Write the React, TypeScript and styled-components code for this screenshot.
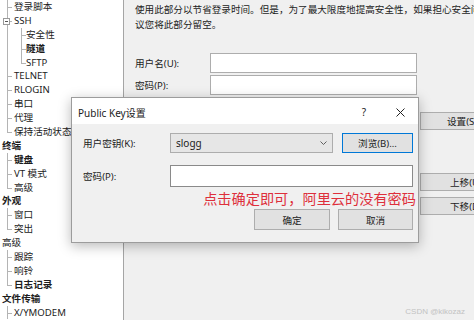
import React from 'react';
import styled, { createGlobalStyle } from 'styled-components';

const LINE = '#b4b4b4';

const GlobalStyle = createGlobalStyle`
    html, body {
        margin: 0;
        padding: 0;
    }
    body {
        font-family: "Noto Sans", "Noto Sans CJK SC", sans-serif;
        font-size: 9.6px;
        color: #1c1c1c;
        background: #f0f0f0;
    }
`;

const Window = styled.div`
    position: relative;
    display: flex;
    width: 474px;
    height: 320px;
    overflow: hidden;
    background: #f0f0f0;
`;

/* ---------- left tree ---------- */

const Tree = styled.ul`
    flex: none;
    width: 123px;
    margin: 0;
    padding: 0;
    list-style: none;
    background: #fff;
    border-right: 1px solid #a5a5a5;
    overflow: hidden;
`;

const Node = styled.li<{ $level: number; $bold?: boolean; $last?: boolean }>`
    position: relative;
    height: 13.9px;
    line-height: 13.9px;
    padding-left: ${(p) => (p.$level === 0 ? 2 : p.$level === 1 ? 14 : 26)}px;
    font-weight: ${(p) => (p.$bold ? 700 : 400)};
    white-space: nowrap;
    background: ${(p) => (p.$level === 2 ? `linear-gradient(${LINE}, ${LINE}) no-repeat 7px 0 / 1px 100%` : 'none')};

    &::before {
        content: '';
        display: ${(p) => (p.$level === 0 ? 'none' : 'block')};
        position: absolute;
        left: ${(p) => (p.$level === 1 ? 7 : 21)}px;
        top: 0;
        width: 4px;
        height: 50%;
        border-left: 1px solid ${LINE};
        border-bottom: 1px solid ${LINE};
    }

    &::after {
        content: '';
        display: ${(p) => (p.$level === 0 || p.$last ? 'none' : 'block')};
        position: absolute;
        left: ${(p) => (p.$level === 1 ? 7 : 21)}px;
        top: 50%;
        bottom: 0;
        border-left: 1px solid ${LINE};
    }
`;

const Toggle = styled.span`
    position: absolute;
    z-index: 1;
    left: 3px;
    top: 50%;
    width: 7px;
    height: 7px;
    margin-top: -3px;
    box-sizing: border-box;
    border: 1px solid #9a9a9a;
    background: #fff;

    &::after {
        content: '';
        position: absolute;
        left: 1px;
        top: 2px;
        width: 3px;
        height: 1px;
        background: #555;
    }
`;

/* ---------- background session panel ---------- */

const Content = styled.div`
    flex: 1;
    min-width: 0;
    display: flex;
    flex-direction: column;
    padding: 2px 0 0 11px;
    overflow: hidden;
`;

const Intro = styled.p`
    margin: 0;
    line-height: 15px;
    white-space: nowrap;
`;

const Body = styled.div`
    display: flex;
    margin-top: 21px;
`;

const FormColumn = styled.div`
    flex: none;
    width: 282px;
    display: flex;
    flex-direction: column;
    gap: 2px;
`;

const FieldRow = styled.div`
    display: grid;
    grid-template-columns: 75px 1fr;
    align-items: center;
    height: 20px;
`;

const TextBox = styled.div`
    height: 100%;
    box-sizing: border-box;
    border: 1px solid #adadad;
    background: #fff;
`;

const SideColumn = styled.div`
    flex: none;
    display: flex;
    flex-direction: column;
    margin-left: 3px;
    padding-top: 59px;
`;

const SideButton = styled.div<{ $gap?: number }>`
    width: 92px;
    height: 18px;
    margin-top: ${(p) => p.$gap || 0}px;
    box-sizing: border-box;
    border: 1px solid #adadad;
    background: #e1e1e1;
    display: flex;
    align-items: center;
    justify-content: center;
    white-space: nowrap;
`;

/* ---------- modal dialog ---------- */

const Dialog = styled.div`
    position: absolute;
    left: 71px;
    top: 97px;
    width: 348px;
    height: 146px;
    box-sizing: border-box;
    display: flex;
    flex-direction: column;
    border: 1px solid #9c9c9c;
    background: #f0f0f0;
    box-shadow: 0 3px 12px rgba(0, 0, 0, 0.28);
`;

const TitleBar = styled.div`
    flex: none;
    height: 26px;
    padding: 2px 0 0 6px;
    box-sizing: border-box;
    display: flex;
    align-items: center;
    background: #fff;
`;

const Title = styled.span`
    flex: 1;
    font-size: 10px;
`;

const CaptionButton = styled.span`
    width: 36px;
    height: 100%;
    display: flex;
    align-items: center;
    justify-content: center;
    font-size: 10px;
    color: #222;
`;

const DialogBody = styled.div`
    flex: 1;
    padding: 9px 5px 12px 11px;
    display: flex;
    flex-direction: column;
`;

const DialogRow = styled.div<{ $gap?: number }>`
    display: grid;
    grid-template-columns: 87px 1fr 80px;
    align-items: center;
    margin-top: ${(p) => p.$gap || 0}px;
`;

const Label = styled.span`
    white-space: nowrap;
`;

const Combo = styled.div`
    height: 20px;
    box-sizing: border-box;
    border: 1px solid #adadad;
    background: #e6e6e6;
    display: flex;
    align-items: center;
    justify-content: space-between;
    padding: 0 5px;
    font-size: 10px;
`;

const Input = styled.div`
    grid-column: 2 / 4;
    height: 22px;
    box-sizing: border-box;
    border: 1px solid #8a8a8a;
    background: #fff;
`;

const Button = styled.div<{ $focused?: boolean; $width: number }>`
    width: ${(p) => p.$width}px;
    height: ${(p) => (p.$focused ? 20 : 21)}px;
    justify-self: end;
    box-sizing: border-box;
    border: 1px solid ${(p) => (p.$focused ? '#0078d7' : '#adadad')};
    background: #e1e1e1;
    display: flex;
    align-items: center;
    justify-content: center;
    white-space: nowrap;
`;

const Note = styled.div`
    height: 22px;
    line-height: 22px;
    margin-right: -3px;
    text-align: right;
    font-family: "Noto Sans CJK SC", sans-serif;
    font-size: 14.2px;
    color: #de2f3b;
    white-space: nowrap;
`;

const Actions = styled.div`
    display: flex;
    justify-content: flex-end;
    gap: 8px;
`;

const Watermark = styled.span`
    position: absolute;
    right: 9px;
    bottom: 4px;
    font-family: "Liberation Sans", sans-serif;
    font-size: 8px;
    color: #c2c2c2;
`;

const tree = [
    { t: '登录脚本', l: 1 },
    { t: 'SSH', l: 1, toggle: true },
    { t: '安全性', l: 2 },
    { t: '隧道', l: 2, b: true },
    { t: 'SFTP', l: 2, last: true },
    { t: 'TELNET', l: 1 },
    { t: 'RLOGIN', l: 1 },
    { t: '串口', l: 1 },
    { t: '代理', l: 1 },
    { t: '保持活动状态', l: 1, last: true },
    { t: '终端', l: 0, b: true },
    { t: '键盘', l: 1, b: true },
    { t: 'VT 模式', l: 1 },
    { t: '高级', l: 1, last: true },
    { t: '外观', l: 0, b: true },
    { t: '窗口', l: 1 },
    { t: '突出', l: 1, last: true },
    { t: '高级', l: 0 },
    { t: '跟踪', l: 1 },
    { t: '响铃', l: 1 },
    { t: '日志记录', l: 1, b: true, last: true },
    { t: '文件传输', l: 0, b: true },
    { t: 'X/YMODEM', l: 1 },
];

const Chevron = () => (
    <svg width="7" height="4" viewBox="0 0 7 4" fill="none">
        <path d="M0.5 0.5 L3.5 3.5 L6.5 0.5" stroke="#606060" strokeWidth="1" />
    </svg>
);

const CloseIcon = () => (
    <svg width="9" height="9" viewBox="0 0 9 9" fill="none">
        <path d="M0.5 0.5 L8.5 8.5 M8.5 0.5 L0.5 8.5" stroke="#222" strokeWidth="1" />
    </svg>
);

export default function App() {
    return (
        <>
            <GlobalStyle />
            <Window>
                <Tree>
                    {tree.map((n, i) => (
                        <Node key={i} $level={n.l} $bold={n.b} $last={n.last}>
                            {n.toggle && <Toggle />}
                            {n.t}
                        </Node>
                    ))}
                </Tree>

                <Content>
                    <Intro>
                        使用此部分以节省登录时间。但是，为了最大限度地提高安全性，如果担心安全问题，建
                        <br />
                        议您将此部分留空。
                    </Intro>
                    <Body>
                        <FormColumn>
                            <FieldRow>
                                <span>用户名(U):</span>
                                <TextBox />
                            </FieldRow>
                            <FieldRow>
                                <span>密码(P):</span>
                                <TextBox />
                            </FieldRow>
                        </FormColumn>
                        <SideColumn>
                            <SideButton>设置(S)...</SideButton>
                            <SideButton $gap={43}>上移(U)</SideButton>
                            <SideButton $gap={6}>下移(D)</SideButton>
                        </SideColumn>
                    </Body>
                </Content>

                <Dialog>
                    <TitleBar>
                        <Title>Public Key设置</Title>
                        <CaptionButton>?</CaptionButton>
                        <CaptionButton>
                            <CloseIcon />
                        </CaptionButton>
                    </TitleBar>
                    <DialogBody>
                        <DialogRow>
                            <Label>用户密钥(K):</Label>
                            <Combo>
                                slogg
                                <Chevron />
                            </Combo>
                            <Button $focused $width={71}>
                                浏览(B)...
                            </Button>
                        </DialogRow>
                        <DialogRow $gap={12}>
                            <Label>密码(P):</Label>
                            <Input />
                        </DialogRow>
                        <Note>点击确定即可，阿里云的没有密码</Note>
                        <Actions>
                            <Button $width={76}>确定</Button>
                            <Button $width={75}>取消</Button>
                        </Actions>
                    </DialogBody>
                </Dialog>

                <Watermark>CSDN @kikozaz</Watermark>
            </Window>
        </>
    );
}
